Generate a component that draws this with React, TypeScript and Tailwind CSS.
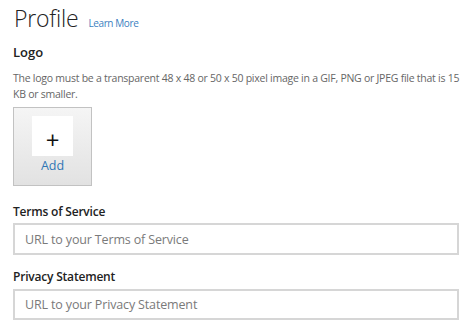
export default function App() {
  return (
    <div
      className="h-[336px] w-[474px] overflow-hidden bg-white pl-[13px] pr-[15px] text-[#222]"
      style={{ fontFamily: '"Open Sans", "Noto Sans", sans-serif' }}
    >
      <div className="flex items-baseline gap-[10px] pt-[3px]">
        <h1 className="ml-[1px] text-[23px] font-light leading-[30px] tracking-[-0.2px] text-[#222]">
          Profile
        </h1>
        <a href="#" className="text-[10px] tracking-[-0.4px] text-[#3c7fc0]">
          Learn More
        </a>
      </div>

      <h2 className="mt-[10px] text-[13px] font-semibold leading-[18px]">Logo</h2>
      <p className="mt-[9px] mr-[-10px] text-[10.5px] leading-[16px] tracking-[-0.25px] text-[#666]">
        The logo must be a transparent 48 x 48 or 50 x 50 pixel image in a GIF, PNG or JPEG file that is 15
        <br />
        KB or smaller.
      </p>

      <button
        type="button"
        className="mt-[5px] flex h-[79px] w-[79px] flex-col items-center border border-[#c2c2c2] bg-gradient-to-b from-[#f5f5f5] to-[#e2e2e2] pt-[8px]"
      >
        <div className="flex h-[40px] w-[41px] items-center justify-center bg-white">
          <span className="mt-[8px] text-[24px] leading-none text-[#111]">+</span>
        </div>
        <span className="mt-[2px] text-[12.5px] leading-[16px] text-[#2f76b5]">Add</span>
      </button>

      <label className="mt-[17px] block text-[12px] font-semibold leading-[18px] tracking-[-0.2px]">
        Terms of Service
      </label>
      <input
        placeholder="URL to your Terms of Service"
        className="mt-[2px] block h-[32px] w-[446px] border-2 border-[#d6d6d6] px-[10px] text-[12.5px] tracking-[-0.15px] text-[#222] outline-none placeholder:text-[#7a7a7a]"
      />

      <label className="mt-[13px] block text-[12px] font-semibold leading-[18px] tracking-[-0.2px]">
        Privacy Statement
      </label>
      <input
        placeholder="URL to your Privacy Statement"
        className="mt-[3px] block h-[31px] w-[446px] border-2 border-[#d6d6d6] px-[10px] text-[12.5px] tracking-[-0.15px] text-[#222] outline-none placeholder:text-[#7a7a7a]"
      />
    </div>
  )
}
